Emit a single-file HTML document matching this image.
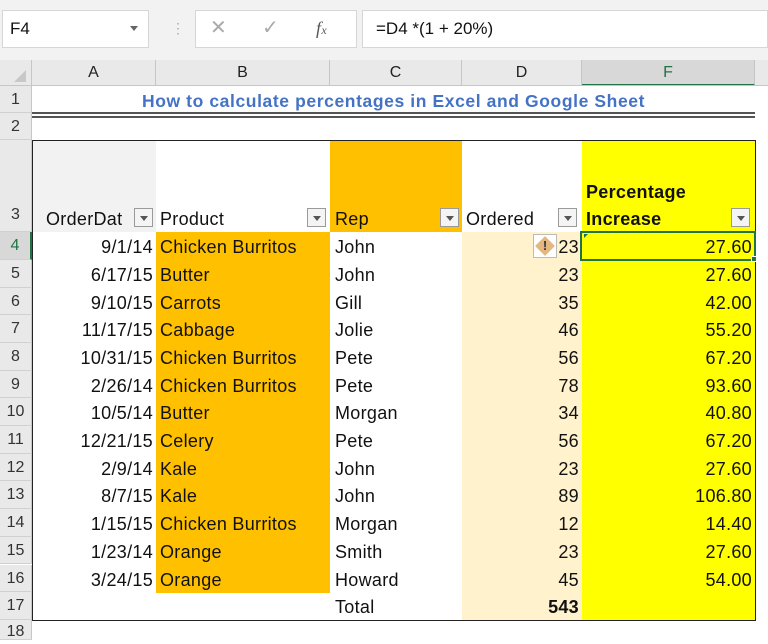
<!DOCTYPE html>
<html><head><meta charset="utf-8"><style>
*{margin:0;padding:0;box-sizing:border-box}
body{width:768px;height:637px;overflow:hidden;background:#fff;font-family:"Liberation Sans",sans-serif;position:relative;color:#111}
.a{position:absolute}
.t{position:absolute;font-size:18px;line-height:28px;white-space:nowrap;letter-spacing:0.3px}
.r{text-align:right}
.rh{position:absolute;left:0;width:32px;text-align:center;font-size:16px;color:#333;background:#e9e9e9;border-bottom:1px solid #d0d0d0;border-right:1px solid #c6c6c6;letter-spacing:0}
.ch{position:absolute;top:60px;height:26px;line-height:26px;text-align:center;font-size:16px;color:#222;background:#e9e9e9;border-right:1px solid #c6c6c6}
.dd{position:absolute;width:19px;height:19px;border:1px solid #9a9a9a;background:#f4f4f4}
.dd:after{content:"";position:absolute;left:5px;top:7px;border-left:4px solid transparent;border-right:4px solid transparent;border-top:5px solid #555}
</style></head><body>
<div class="a" style="left:0;top:0;width:768px;height:60px;background:#f2f2f2"></div>
<div class="a" style="left:2px;top:10px;width:147px;height:38px;background:#fff;border:1px solid #d6d6d6"></div>
<div class="t" style="left:10px;top:15px;font-size:17px;letter-spacing:0">F4</div>
<div class="a" style="left:130px;top:26px;border-left:4px solid transparent;border-right:4px solid transparent;border-top:5px solid #666"></div>
<div class="a" style="left:171px;top:20px;color:#aaa;font-size:14px">⋮</div>
<div class="a" style="left:195px;top:10px;width:162px;height:38px;background:#fff;border:1px solid #d6d6d6"></div>
<div class="t" style="left:210px;top:14px;color:#aaa;font-size:20px">✕</div>
<div class="t" style="left:262px;top:14px;color:#aaa;font-size:20px">✓</div>
<div class="t" style="left:316px;top:14px;color:#555;font-family:'Liberation Serif',serif;font-style:italic;font-size:18px">f<span style="font-size:12px">x</span></div>
<div class="a" style="left:362px;top:10px;width:406px;height:38px;background:#fff;border:1px solid #d6d6d6"></div>
<div class="t" style="left:376px;top:15px;font-size:17px;letter-spacing:0">=D4 *(1 + 20%)</div>
<div class="a" style="left:0;top:60px;width:32px;height:26px;background:#e9e9e9;border-right:1px solid #c6c6c6"></div>
<div class="a" style="left:14px;top:70px;border-left:12px solid transparent;border-bottom:12px solid #c8c8c8"></div>
<div class="ch" style="left:32px;width:124px">A</div>
<div class="ch" style="left:156px;width:174px">B</div>
<div class="ch" style="left:330px;width:132px">C</div>
<div class="ch" style="left:462px;width:120px">D</div>
<div class="ch" style="left:582px;width:173px;background:#d8d8d8;border-bottom:2px solid #217346;color:#217346">F</div>
<div class="ch" style="left:755px;width:13px;border:none"></div>
<div class="a" style="left:0;top:85px;width:768px;height:1px;background:#c6c6c6"></div>
<div class="rh" style="top:86px;height:27px;line-height:27px">1</div>
<div class="rh" style="top:113px;height:27px;line-height:27px">2</div>
<div class="rh" style="top:140px;height:92px;line-height:150px">3</div>
<div class="t" style="left:32px;top:87px;width:723px;text-align:center;color:#4472C4;font-weight:bold;font-size:17.5px;line-height:28px;letter-spacing:0.6px">How to calculate percentages in Excel and Google Sheet</div>
<div class="a" style="left:32px;top:112px;width:723px;height:2px;background:#555"></div>
<div class="a" style="left:32px;top:116px;width:723px;height:2px;background:#555"></div>
<!-- fills -->
<div class="a" style="left:32px;top:141px;width:124px;height:91px;background:#f2f2f2"></div>
<div class="a" style="left:330px;top:141px;width:132px;height:91px;background:#FFC000"></div>
<div class="a" style="left:156px;top:232px;width:174px;height:361px;background:#FFC000"></div>
<div class="a" style="left:462px;top:232px;width:120px;height:388px;background:#FFF2CC"></div>
<div class="a" style="left:582px;top:141px;width:173px;height:479px;background:#FFFF00"></div>
<div class="a" style="left:32px;top:140px;width:724px;height:481px;border:1.5px solid #222"></div>
<!-- header row 3 -->
<div class="t" style="left:46px;top:205px">OrderDat</div><div class="dd" style="left:134px;top:208px"></div>
<div class="t" style="left:160px;top:205px">Product</div><div class="dd" style="left:307px;top:208px"></div>
<div class="t" style="left:335px;top:205px">Rep</div><div class="dd" style="left:440px;top:208px"></div>
<div class="t" style="left:466px;top:205px">Ordered</div><div class="dd" style="left:558px;top:208px"></div>
<div class="t" style="left:586px;top:178px;font-weight:bold">Percentage</div>
<div class="t" style="left:586px;top:205px;font-weight:bold">Increase</div><div class="dd" style="left:731px;top:208px"></div>
<!-- rows -->
<div class="rh" style="top:232px;height:28px;line-height:28px;color:#217346;background:#d8d8d8;border-right:2px solid #217346">4</div>
<div class="t r" style="left:32px;width:121px;top:233px">9/1/14</div><div class="t" style="left:160px;top:233px">Chicken Burritos</div><div class="t" style="left:335px;top:233px">John</div><div class="t r" style="left:462px;width:117px;top:233px">23</div><div class="t r" style="left:582px;width:170px;top:233px">27.60</div>
<div class="rh" style="top:260px;height:27.7px;line-height:28px">5</div>
<div class="t r" style="left:32px;width:121px;top:261px">6/17/15</div><div class="t" style="left:160px;top:261px">Butter</div><div class="t" style="left:335px;top:261px">John</div><div class="t r" style="left:462px;width:117px;top:261px">23</div><div class="t r" style="left:582px;width:170px;top:261px">27.60</div>
<div class="rh" style="top:287.5px;height:27.7px;line-height:28px">6</div>
<div class="t r" style="left:32px;width:121px;top:288.5px">9/10/15</div><div class="t" style="left:160px;top:288.5px">Carrots</div><div class="t" style="left:335px;top:288.5px">Gill</div><div class="t r" style="left:462px;width:117px;top:288.5px">35</div><div class="t r" style="left:582px;width:170px;top:288.5px">42.00</div>
<div class="rh" style="top:315.2px;height:27.7px;line-height:28px">7</div>
<div class="t r" style="left:32px;width:121px;top:316.2px">11/17/15</div><div class="t" style="left:160px;top:316.2px">Cabbage</div><div class="t" style="left:335px;top:316.2px">Jolie</div><div class="t r" style="left:462px;width:117px;top:316.2px">46</div><div class="t r" style="left:582px;width:170px;top:316.2px">55.20</div>
<div class="rh" style="top:342.9px;height:27.7px;line-height:28px">8</div>
<div class="t r" style="left:32px;width:121px;top:343.9px">10/31/15</div><div class="t" style="left:160px;top:343.9px">Chicken Burritos</div><div class="t" style="left:335px;top:343.9px">Pete</div><div class="t r" style="left:462px;width:117px;top:343.9px">56</div><div class="t r" style="left:582px;width:170px;top:343.9px">67.20</div>
<div class="rh" style="top:370.6px;height:27.7px;line-height:28px">9</div>
<div class="t r" style="left:32px;width:121px;top:371.6px">2/26/14</div><div class="t" style="left:160px;top:371.6px">Chicken Burritos</div><div class="t" style="left:335px;top:371.6px">Pete</div><div class="t r" style="left:462px;width:117px;top:371.6px">78</div><div class="t r" style="left:582px;width:170px;top:371.6px">93.60</div>
<div class="rh" style="top:398.3px;height:27.7px;line-height:28px">10</div>
<div class="t r" style="left:32px;width:121px;top:399.3px">10/5/14</div><div class="t" style="left:160px;top:399.3px">Butter</div><div class="t" style="left:335px;top:399.3px">Morgan</div><div class="t r" style="left:462px;width:117px;top:399.3px">34</div><div class="t r" style="left:582px;width:170px;top:399.3px">40.80</div>
<div class="rh" style="top:426px;height:27.7px;line-height:28px">11</div>
<div class="t r" style="left:32px;width:121px;top:427px">12/21/15</div><div class="t" style="left:160px;top:427px">Celery</div><div class="t" style="left:335px;top:427px">Pete</div><div class="t r" style="left:462px;width:117px;top:427px">56</div><div class="t r" style="left:582px;width:170px;top:427px">67.20</div>
<div class="rh" style="top:453.7px;height:27.7px;line-height:28px">12</div>
<div class="t r" style="left:32px;width:121px;top:454.7px">2/9/14</div><div class="t" style="left:160px;top:454.7px">Kale</div><div class="t" style="left:335px;top:454.7px">John</div><div class="t r" style="left:462px;width:117px;top:454.7px">23</div><div class="t r" style="left:582px;width:170px;top:454.7px">27.60</div>
<div class="rh" style="top:481.4px;height:27.7px;line-height:28px">13</div>
<div class="t r" style="left:32px;width:121px;top:482.4px">8/7/15</div><div class="t" style="left:160px;top:482.4px">Kale</div><div class="t" style="left:335px;top:482.4px">John</div><div class="t r" style="left:462px;width:117px;top:482.4px">89</div><div class="t r" style="left:582px;width:170px;top:482.4px">106.80</div>
<div class="rh" style="top:509.1px;height:27.7px;line-height:28px">14</div>
<div class="t r" style="left:32px;width:121px;top:510.1px">1/15/15</div><div class="t" style="left:160px;top:510.1px">Chicken Burritos</div><div class="t" style="left:335px;top:510.1px">Morgan</div><div class="t r" style="left:462px;width:117px;top:510.1px">12</div><div class="t r" style="left:582px;width:170px;top:510.1px">14.40</div>
<div class="rh" style="top:536.8px;height:27.7px;line-height:28px">15</div>
<div class="t r" style="left:32px;width:121px;top:537.8px">1/23/14</div><div class="t" style="left:160px;top:537.8px">Orange</div><div class="t" style="left:335px;top:537.8px">Smith</div><div class="t r" style="left:462px;width:117px;top:537.8px">23</div><div class="t r" style="left:582px;width:170px;top:537.8px">27.60</div>
<div class="rh" style="top:564.5px;height:27.7px;line-height:28px">16</div>
<div class="t r" style="left:32px;width:121px;top:565.5px">3/24/15</div><div class="t" style="left:160px;top:565.5px">Orange</div><div class="t" style="left:335px;top:565.5px">Howard</div><div class="t r" style="left:462px;width:117px;top:565.5px">45</div><div class="t r" style="left:582px;width:170px;top:565.5px">54.00</div>
<div class="rh" style="top:592.2px;height:27.7px;line-height:28px">17</div>
<div class="t" style="left:335px;top:593.2px">Total</div><div class="t r" style="left:462px;width:117px;top:593.2px;font-weight:bold">543</div>
<div class="rh" style="top:620px;height:20px;line-height:24px">18</div>
<!-- selection -->
<div class="a" style="left:580px;top:231px;width:176px;height:30px;border:2px solid #217346"></div>
<div class="a" style="left:751px;top:256px;width:6px;height:6px;background:#217346;border:1px solid #fff"></div>
<div class="a" style="left:584px;top:234px;border-right:4px solid transparent;border-top:4px solid #217346"></div>
<div class="a" style="left:533px;top:234px;width:24px;height:24px;border:1px solid #bbb;background:#fff"></div>
<div class="a" style="left:538px;top:239px;width:14px;height:14px;background:#E3B77F;transform:rotate(45deg)"></div>
<div class="t" style="left:540px;top:232px;font-size:13px;font-weight:bold;width:10px;text-align:center;color:#333;letter-spacing:0">!</div>
</body></html>
